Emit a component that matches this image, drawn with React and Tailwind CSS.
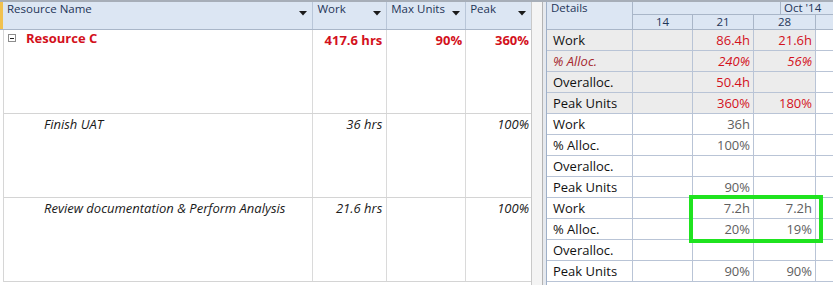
import React from 'react';

const font = { fontFamily: '"Open Sans", "Noto Sans", sans-serif' };

// Little black triangle used on the column headers
const Arrow = () => (
  <svg width="8" height="5" viewBox="0 0 8 5" className="shrink-0">
    <path d="M0 0 L8 0 L4 4.5 Z" fill="#1a1a1a" />
  </svg>
);

const HeaderCell = ({ label, width, last }) => (
  <div
    className={`flex items-start justify-between h-full pl-[4px] pr-[5px] ${last ? '' : 'border-r border-[#b9c6d8]'} ${width}`}
  >
    <span className="text-[11.5px] leading-[14px] text-[#1f3558]">{label}</span>
    <span className="mt-[9px]">
      <Arrow />
    </span>
  </div>
);

const resources = [
  {
    name: 'Resource C',
    work: '417.6 hrs',
    max: '90%',
    peak: '360%',
    summary: true,
  },
  { name: 'Finish UAT', work: '36 hrs', max: '', peak: '100%' },
  { name: 'Review documentation & Perform Analysis', work: '21.6 hrs', max: '', peak: '100%' },
];

const details = [
  [
    { label: 'Work', a: '86.4h', b: '21.6h' },
    { label: '% Alloc.', a: '240%', b: '56%', italic: true },
    { label: 'Overalloc.', a: '50.4h', b: '' },
    { label: 'Peak Units', a: '360%', b: '180%' },
  ],
  [
    { label: 'Work', a: '36h', b: '' },
    { label: '% Alloc.', a: '100%', b: '' },
    { label: 'Overalloc.', a: '', b: '' },
    { label: 'Peak Units', a: '90%', b: '' },
  ],
  [
    { label: 'Work', a: '7.2h', b: '7.2h' },
    { label: '% Alloc.', a: '20%', b: '19%' },
    { label: 'Overalloc.', a: '', b: '' },
    { label: 'Peak Units', a: '90%', b: '90%' },
  ],
];

const ResourceRow = ({ r }) => {
  const txt = r.summary
    ? 'font-bold text-[#d3111c] not-italic'
    : 'italic text-[#1a1a1a]';
  return (
    <div className="flex h-[84px] border-b border-[#d4d4d4]">
      <div className="w-[310px] border-r border-[#dadada] flex items-start">
        {r.summary ? (
          <div className="flex items-center h-[20px] pl-[4px] -mt-[2px]">
            <div className="w-[8px] h-[8px] border border-[#8d8d8d] bg-white flex items-center justify-center">
              <div className="w-[4px] h-px bg-[#222]" />
            </div>
            <span className={`ml-[10px] text-[13px] leading-[20px] ${txt}`}>{r.name}</span>
          </div>
        ) : (
          <span className={`pl-[40px] text-[13px] leading-[20px] ${txt}`}>{r.name}</span>
        )}
      </div>
      <div className={`w-[74px] border-r border-[#dadada] text-right pr-[4px] text-[13px] leading-[20px] ${txt}`}>
        {r.work}
      </div>
      <div className={`w-[79px] border-r border-[#dadada] text-right pr-[3px] text-[13px] leading-[20px] ${txt}`}>
        {r.max}
      </div>
      <div className={`w-[65px] text-right pr-[2px] text-[13px] leading-[20px] ${txt}`}>{r.peak}</div>
    </div>
  );
};

const DetailRow = ({ d, summary }) => {
  const bg = summary ? 'bg-[#ececec]' : 'bg-white';
  const valColor = summary ? 'text-[#d3111c]' : 'text-[#5e5e5e]';
  const italic = d.italic ? 'italic' : '';
  const labelColor = summary && d.italic ? 'text-[#a6282f]' : 'text-[#111]';
  return (
    <div className={`grid grid-cols-[86px_60px_61px_62px_1fr] h-[21px] border-b border-[#b9c4d6] ${bg}`}>
      <div className={`border-r border-[#b9c4d6] pl-[6px] text-[13px] leading-[20px] ${labelColor} ${italic}`}>
        {d.label}
      </div>
      <div className="border-r border-[#b9c4d6]" />
      <div className={`border-r border-[#b9c4d6] text-right pr-[3px] text-[13px] leading-[20px] ${valColor} ${italic}`}>
        {d.a}
      </div>
      <div className={`border-r border-[#b9c4d6] text-right pr-[3px] text-[13px] leading-[20px] ${valColor} ${italic}`}>
        {d.b}
      </div>
      <div className="bg-white" />
    </div>
  );
};

const App = () => {
  return (
    <div className="relative w-[833px] h-[285px] overflow-hidden bg-white" style={font}>
      <div className="flex h-full border-t-2 border-[#a7aeb8]">
        {/* left sheet */}
        <div className="w-[532px] flex flex-col border-r border-[#c9c9c9]">
          <div className="flex h-[28px] bg-[#dce6f3] border-b border-[#a9b6c8]">
            <div className="w-[3px] h-full bg-[#f1c14f]" />
            <HeaderCell label="Resource Name" width="w-[311px]" />
            <HeaderCell label="Work" width="w-[74px]" />
            <HeaderCell label="Max Units" width="w-[79px]" />
            <HeaderCell label="Peak" width="w-[65px]" last />
          </div>
          <div className="ml-[3px] border-l border-[#d6d6d6]">
            {resources.map((r) => (
              <ResourceRow key={r.name} r={r} />
            ))}
          </div>
        </div>

        {/* splitter */}
        <div className="w-[15px] flex bg-[#f4f4f4]">
          <div className="w-[10px]" />
          <div className="w-px bg-[#b3b3b3]" />
          <div className="w-[3px] bg-[#e6e9ee]" />
          <div className="w-px bg-[#9fb0c8]" />
        </div>

        {/* right usage grid */}
        <div className="flex-1 flex flex-col">
          <div className="flex h-[28px] bg-[#dce6f3] border-b border-[#a9b6c8]">
            <div className="w-[86px] border-r border-[#a9b6c8] pl-[4px] text-[11.5px] leading-[12px] text-[#1f3558]">
              Details
            </div>
            <div className="flex-1 flex flex-col">
              <div className="flex h-[13px] border-b border-[#a9b6c8]">
                <div className="w-[148px] border-r border-[#a9b6c8]" />
                <div className="pl-[3px] text-[11.5px] leading-[12px] text-[#1f3558]">Oct '14</div>
              </div>
              <div className="grid grid-cols-[60px_61px_62px_1fr] flex-1 text-[11.5px] leading-[14px] text-[#1f3558]">
                <div className="border-r border-[#a9b6c8] text-center">14</div>
                <div className="border-r border-[#a9b6c8] text-center">21</div>
                <div className="border-r border-[#a9b6c8] text-center">28</div>
                <div />
              </div>
            </div>
          </div>
          <div>
            {details.map((group, gi) =>
              group.map((d, i) => <DetailRow key={`${gi}-${i}`} d={d} summary={gi === 0} />)
            )}
          </div>
        </div>
      </div>

      {/* highlight box */}
      <div className="absolute left-[689px] top-[195px] w-[134px] h-[48px] border-[4px] border-[#1fe31f]" />
    </div>
  );
};

export default App;
